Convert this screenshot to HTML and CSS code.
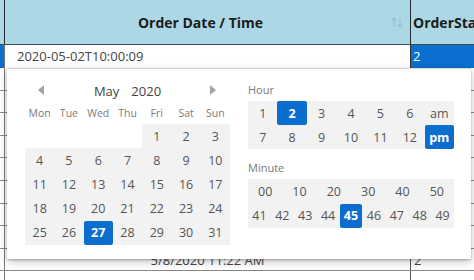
FILE: index.html
```html
<!DOCTYPE html>
<html>
<head>
<meta charset="utf-8">
<link rel="stylesheet" href="styles.css">
</head>
<body>
<div class="table">
  <div class="row head">
    <div class="cell c0"></div>
    <div class="cell c1">
      <span class="htext">Order Date / Time</span>
      <svg class="sort" width="12" height="11" viewBox="0 0 12 11"><path d="M3 10V1M0.8 3.4L3 1l2.2 2.4M9 1v9M6.8 7.6L9 10l2.2-2.4" fill="none" stroke="#93bccb" stroke-width="1.1"/></svg>
    </div>
    <div class="cell c2">OrderStatus</div>
  </div>
  <div class="row edit">
    <div class="cell c0 blue"></div>
    <div class="cell c1"><div class="input">2020-05-02T10:00:09</div></div>
    <div class="cell c2 blue">2</div>
  </div>
  <div class="row body"><div class="cell c0"></div><div class="cell c1"></div><div class="cell c2"></div></div>
  <div class="row body"><div class="cell c0"></div><div class="cell c1"></div><div class="cell c2"></div></div>
  <div class="row body"><div class="cell c0"></div><div class="cell c1"></div><div class="cell c2"></div></div>
  <div class="row body"><div class="cell c0"></div><div class="cell c1"></div><div class="cell c2"></div></div>
  <div class="row body"><div class="cell c0"></div><div class="cell c1"></div><div class="cell c2"></div></div>
  <div class="row body"><div class="cell c0"></div><div class="cell c1"></div><div class="cell c2"></div></div>
  <div class="row body"><div class="cell c0"></div><div class="cell c1"></div><div class="cell c2"></div></div>
  <div class="row body"><div class="cell c0"></div><div class="cell c1"></div><div class="cell c2"></div></div>
  <div class="row body last"><div class="cell c0"></div><div class="cell c1 center">5/8/2020 11:22 AM</div><div class="cell c2">2</div></div>
  <div class="row body"><div class="cell c0"></div><div class="cell c1"></div><div class="cell c2"></div></div>

  <div class="popup">
    <div class="cal">
      <div class="nav">
        <span class="arrow left"></span>
        <div class="title"><span>May</span><span class="year">2020</span></div>
        <span class="arrow right"></span>
      </div>
      <div class="dow"><span>Mon</span><span>Tue</span><span>Wed</span><span>Thu</span><span>Fri</span><span>Sat</span><span>Sun</span></div>
      <div class="days">
        <span class="empty"></span><span class="empty"></span><span class="empty"></span><span class="empty"></span>
        <span>1</span><span>2</span><span>3</span>
        <span>4</span><span>5</span><span>6</span><span>7</span><span>8</span><span>9</span><span>10</span>
        <span>11</span><span>12</span><span>13</span><span>14</span><span>15</span><span>16</span><span>17</span>
        <span>18</span><span>19</span><span>20</span><span>21</span><span>22</span><span>23</span><span>24</span>
        <span>25</span><span>26</span><span class="sel">27</span><span>28</span><span>29</span><span>30</span><span>31</span>
      </div>
    </div>
    <div class="time">
      <div class="label">Hour</div>
      <div class="hours">
        <span>1</span><span class="sel">2</span><span>3</span><span>4</span><span>5</span><span>6</span><span>am</span>
        <span>7</span><span>8</span><span>9</span><span>10</span><span>11</span><span>12</span><span class="sel">pm</span>
      </div>
      <div class="label minute">Minute</div>
      <div class="mins six">
        <span>00</span><span>10</span><span>20</span><span>30</span><span>40</span><span>50</span>
      </div>
      <div class="mins nine">
        <span>41</span><span>42</span><span>43</span><span>44</span><span class="sel">45</span><span>46</span><span>47</span><span>48</span><span>49</span>
      </div>
    </div>
  </div>
</div>
</body>
</html>
```

FILE: styles.css
```css
* { box-sizing: border-box; }
html, body { margin: 0; padding: 0; background: #fff; }
body {
  font-family: "Open Sans", "Noto Sans", sans-serif;
  color: #444;
  width: 474px;
  height: 280px;
  overflow: hidden;
}
.table { position: relative; width: 474px; }
.row { display: flex; }
.cell { overflow: hidden; white-space: nowrap; }
.c0 { width: 5px; flex: none; border-right: 1px solid #777; }
.c1 { width: 406px; flex: none; border-right: 1px solid #555; }
.c2 { flex: 1; min-width: 0; padding-left: 3px; }

.head { height: 45px; background: #acd8e5; border-bottom: 1px solid #3c4a50; }
.head .c0, .head .c1 { border-right-color: #1f2a2e; }
.head .cell { display: flex; align-items: center; font-weight: bold; font-size: 14px; color: #1c1c1c; }
.head .c1 { padding-left: 5px; padding-right: 7px; }
.htext { flex: 1; text-align: center; }
.sort { display: block; flex: none; }
.head .c2 { padding-left: 2px; }

.edit { height: 23px; }
.edit .c1 { padding-left: 2px; border-right-color: #333; }
.input {
  height: 23px;
  background: #fff;
  padding-left: 10px;
  font-size: 13px;
  line-height: 23px;
  color: #444;
}
.blue { background: #0a6fce; color: #fff; }
.edit .c2 { font-size: 13px; line-height: 23px; padding-left: 2px; }

.body { height: 22.6px; border-bottom: 1px solid #888; }
.body .cell { font-size: 13px; line-height: 22px; color: #444; }
.center { text-align: center; }

.popup {
  position: absolute;
  left: 7px;
  top: 68px;
  width: 464px;
  height: 191px;
  background: #fff;
  z-index: 2;
  display: flex;
  padding: 10px 0 0 18px;
  box-shadow: 0 1px 2px rgba(0,0,0,0.25), 0 3px 8px rgba(0,0,0,0.22);
  border-top: 1px solid #d6d6d6;
  font-size: 12.5px;
  color: #555;
}

.cal { width: 205px; flex: none; }
.nav {
  display: grid;
  grid-template-columns: repeat(7, 1fr);
  height: 22px;
  align-items: center;
}
.arrow { width: 0; height: 0; border-top: 5px solid transparent; border-bottom: 5px solid transparent; }
.arrow.left { grid-column: 1; justify-self: center; margin-left: 3px; border-right: 6px solid #a3a3a3; }
.arrow.right { grid-column: 7; justify-self: center; margin-right: 5px; border-left: 6px solid #a3a3a3; }
.title { grid-column: 2 / 7; text-align: center; font-size: 13px; color: #444; padding-top: 2px; }
.title .year { margin-left: 12px; }

.dow {
  display: grid;
  grid-template-columns: repeat(7, 1fr);
  height: 23px;
  align-items: center;
  text-align: center;
  font-size: 10.5px;
  color: #7a7a7a;
}
.days {
  display: grid;
  grid-template-columns: repeat(7, 1fr);
  grid-auto-rows: 24.2px;
}
.days span, .hours span, .mins span {
  background: #f2f2f2;
  display: flex;
  align-items: center;
  justify-content: center;
}
.days .empty { background: transparent; }
.popup .sel { background: #0b6ecf; color: #fff; font-weight: bold; border-radius: 2px; }

.time { width: 206px; flex: none; margin-left: 18px; }
.label { height: 22px; line-height: 22px; font-size: 11px; color: #7a7a7a; }
.label.minute { height: 30px; padding-top: 8px; }
.hours {
  display: grid;
  grid-template-columns: repeat(7, 1fr);
  grid-auto-rows: 24px;
}
.mins { display: grid; height: 24.5px; }
.mins.six { grid-template-columns: repeat(6, 1fr); }
.mins.nine { grid-template-columns: repeat(9, 1fr); }
```
